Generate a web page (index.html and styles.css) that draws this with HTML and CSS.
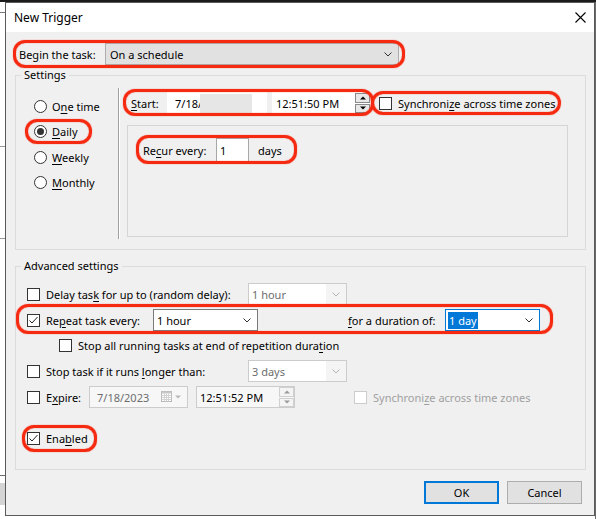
FILE: index.html
```html
<!DOCTYPE html>
<html>
<head>
<meta charset="utf-8">
<title>New Trigger</title>
<link rel="stylesheet" href="styles.css">
</head>
<body>
<div class="screen">
  <div class="topbar"></div>
  <div class="main">
    <div class="bg-left"></div>
    <div class="dialog">
      <div class="titlebar">
        <span class="title">New Trigger</span>
        <svg class="close" width="11" height="11" viewBox="0 0 11 11"><path d="M0.5 0.5L10.5 10.5M10.5 0.5L0.5 10.5" stroke="#000" stroke-width="1.1" fill="none"/></svg>
      </div>
      <div class="content">
        <div class="begin-row">
          <div class="hl hl-begin">
            <span class="begin-lbl">Be<u>g</u>in the task:</span>
            <div class="combo combo-begin">
              <span class="combo-txt">On a schedule</span>
              <span class="chev"><svg width="8" height="5" viewBox="0 0 8 5"><path d="M0.5 0.5L4 4L7.5 0.5" stroke="#333" fill="none"/></svg></span>
            </div>
          </div>
        </div>

        <fieldset class="group settings">
          <legend>Settings</legend>
          <div class="settings-body">
            <div class="radios">
              <div class="radio-row"><span class="opt"><span class="radio"></span><span class="opt-lbl">O<u>n</u>e time</span></span></div>
              <div class="radio-row"><span class="opt hl hl-daily"><span class="radio checked"></span><span class="opt-lbl"><u>D</u>aily</span></span></div>
              <div class="radio-row"><span class="opt"><span class="radio"></span><span class="opt-lbl"><u>W</u>eekly</span></span></div>
              <div class="radio-row"><span class="opt"><span class="radio"></span><span class="opt-lbl"><u>M</u>onthly</span></span></div>
            </div>
            <div class="vsep"></div>
            <div class="schedule">
              <div class="start-row">
                <div class="hl hl-start">
                  <span class="start-lbl"><u>S</u>tart:</span>
                  <div class="field date-start">
                    <span class="date-txt">7/18/</span><span class="blur"></span>
                  </div>
                  <div class="field time-start">
                    <span class="field-txt">12:51:50 PM</span>
                    <span class="spin">
                      <span class="spin-btn"><svg width="6" height="4" viewBox="0 0 6 4"><path d="M0 3.5L3 0.5L6 3.5Z" fill="#000"/></svg></span>
                      <span class="spin-btn"><svg width="6" height="4" viewBox="0 0 6 4"><path d="M0 0.5L3 3.5L6 0.5Z" fill="#000"/></svg></span>
                    </span>
                  </div>
                </div>
                <div class="hl hl-sync">
                  <span class="check"></span>
                  <span class="chk-lbl">Synchroni<u>z</u>e across time zones</span>
                </div>
              </div>
              <div class="panel">
                <div class="hl hl-recur">
                  <span class="recur-lbl">Re<u>c</u>ur every:</span>
                  <span class="num-input">1</span>
                  <span class="days">days</span>
                </div>
              </div>
            </div>
          </div>
        </fieldset>

        <fieldset class="group advanced">
          <legend>Advanced settings</legend>
          <div class="adv-body">
            <div class="adv-row r-delay">
              <span class="check"></span>
              <span class="chk-lbl w-wide">Delay tas<u>k</u> for up to (random delay):</span>
              <div class="combo combo-dis w-99">
                <span class="combo-txt">1 hour</span>
                <span class="chev chev-dis"><svg width="8" height="5" viewBox="0 0 8 5"><path d="M0.5 0.5L4 4L7.5 0.5" stroke="#b4b4b4" fill="none"/></svg></span>
              </div>
            </div>
            <div class="adv-row r-repeat">
              <div class="hl hl-repeat">
                <span class="check checked"><svg width="11" height="11" viewBox="0 0 11 11"><path d="M1.5 5.5L4 8L9.5 2" stroke="#222" stroke-width="1" fill="none"/></svg></span>
                <span class="chk-lbl w-repeat">Re<u>p</u>eat task every:</span>
                <div class="combo w-105">
                  <span class="combo-txt">1 hour</span>
                  <span class="chev"><svg width="8" height="5" viewBox="0 0 8 5"><path d="M0.5 0.5L4 4L7.5 0.5" stroke="#333" fill="none"/></svg></span>
                </div>
                <span class="dur-lbl"><u>f</u>or a duration of:</span>
                <div class="combo combo-focus w-95">
                  <span class="combo-txt"><span class="sel">1 day</span></span>
                  <span class="chev"><svg width="8" height="5" viewBox="0 0 8 5"><path d="M0.5 0.5L4 4L7.5 0.5" stroke="#333" fill="none"/></svg></span>
                </div>
              </div>
            </div>
            <div class="adv-row r-stopall">
              <span class="check"></span>
              <span class="chk-lbl">Stop all running tasks at end of repetition dura<u>t</u>ion</span>
            </div>
            <div class="adv-row r-stop">
              <span class="check"></span>
              <span class="chk-lbl w-wide">Stop task if it runs <u>l</u>onger than:</span>
              <div class="combo combo-dis w-99">
                <span class="combo-txt">3 days</span>
                <span class="chev chev-dis"><svg width="8" height="5" viewBox="0 0 8 5"><path d="M0.5 0.5L4 4L7.5 0.5" stroke="#b4b4b4" fill="none"/></svg></span>
              </div>
            </div>
            <div class="adv-row r-expire">
              <span class="check"></span>
              <span class="chk-lbl w-expire">E<u>x</u>pire:</span>
              <div class="field field-dis w-99">
                <span class="field-txt dis-txt">7/18/2023</span>
                <span class="cal">
                  <svg width="12" height="12" viewBox="0 0 12 12"><rect x="0.5" y="0.5" width="10" height="10" fill="#fff" stroke="#b8b8b8"/><rect x="0.5" y="0.5" width="10" height="2" fill="#c8c8c8"/><path d="M3.5 2.5V10.5M5.5 2.5V10.5M7.5 2.5V10.5M0.5 4.5H10.5M0.5 6.5H10.5M0.5 8.5H10.5" stroke="#d2d2d2"/></svg>
                  <svg width="6" height="4" viewBox="0 0 6 4"><path d="M0 0.5L3 3.5L6 0.5Z" fill="#b8b8b8"/></svg>
                </span>
              </div>
              <div class="field field-dis w-99 time-exp">
                <span class="field-txt">12:51:52 PM</span>
                <span class="spin spin-dis">
                  <span class="spin-btn"><svg width="6" height="4" viewBox="0 0 6 4"><path d="M0 3.5L3 0.5L6 3.5Z" fill="#9a9a9a"/></svg></span>
                  <span class="spin-btn"><svg width="6" height="4" viewBox="0 0 6 4"><path d="M0 0.5L3 3.5L6 0.5Z" fill="#9a9a9a"/></svg></span>
                </span>
              </div>
              <span class="check check-dis"></span>
              <span class="chk-lbl dis-lbl">Synchroni<u>z</u>e across time zones</span>
            </div>
            <div class="adv-row r-enabled">
              <div class="hl hl-enabled">
                <span class="check checked"><svg width="11" height="11" viewBox="0 0 11 11"><path d="M1.5 5.5L4 8L9.5 2" stroke="#222" stroke-width="1" fill="none"/></svg></span>
                <span class="chk-lbl">Ena<u>b</u>led</span>
              </div>
            </div>
          </div>
        </fieldset>

        <div class="buttons">
          <button class="btn btn-default">OK</button>
          <button class="btn">Cancel</button>
        </div>
      </div>
    </div>
    <div class="bg-right"></div>
  </div>
</div>
</body>
</html>
```

FILE: styles.css
```css
* { box-sizing: border-box; }
html, body { margin: 0; padding: 0; }
body {
  width: 596px;
  height: 519px;
  overflow: hidden;
  background: #ffffff;
  font-family: "Noto Sans", "Liberation Sans", sans-serif;
  font-size: 11px;
  line-height: 15px;
  color: #000;
}
u { text-decoration: underline; text-underline-offset: 2px; text-decoration-thickness: 1px; }

.screen { display: flex; flex-direction: column; width: 596px; height: 519px; }
.topbar { height: 2px; background: #1c1c1c; flex: none; }
.main { display: flex; flex: none; }
.bg-left {
  width: 5px;
  height: 517px;
  flex: none;
  background:
    linear-gradient(#7a7a7a, #7a7a7a) 0 10px / 5px 1px no-repeat,
    linear-gradient(#9a9a9a, #9a9a9a) 0 144px / 5px 1px no-repeat,
    linear-gradient(#9a9a9a, #9a9a9a) 0 236px / 5px 1px no-repeat,
    linear-gradient(#6a6a6a, #6a6a6a) 0 473px / 5px 1px no-repeat,
    linear-gradient(#d4d4d4, #d4d4d4) 0 481px / 5px 22px no-repeat,
    #ffffff;
}
.bg-right { width: 1px; height: 517px; background: #6a6a6a; flex: none; }

.dialog {
  width: 590px;
  height: 514px;
  flex: none;
  border: 1px solid #5a5a5a;
  background: #f0f0f0;
  display: flex;
  flex-direction: column;
}
.titlebar {
  height: 29px;
  flex: none;
  background: #ffffff;
  display: flex;
  align-items: center;
  justify-content: space-between;
  padding: 0 8px 0 8px;
}
.title { font-size: 12px; }

.content { display: flex; flex-direction: column; flex: 1; }

/* highlight annotations */
.hl { position: relative; }
.hl::after {
  content: "";
  position: absolute;
  border: 3px solid #f52a10;
  border-radius: 12px;
  box-shadow: 0 0 1px #f52a10, inset 0 0 1px #f52a10;
  pointer-events: none;
}
.hl-begin::after { top: -3px; bottom: -3px; left: -6px; right: -6px; }
.hl-daily::after { top: -5px; bottom: -5px; left: -9px; right: -14px; }
.hl-start::after { top: -3px; bottom: -2px; left: -8px; right: -4px; }
.hl-sync::after { top: -5px; bottom: -4px; left: -8px; right: -6px; }
.hl-recur::after { top: -3px; bottom: -2px; left: -7px; right: -15px; }
.hl-repeat::after { top: -5px; bottom: -3px; left: -11px; right: -13px; }
.hl-enabled::after { top: -6px; bottom: -6px; left: -5px; right: -9px; }

/* begin row */
.begin-row { margin-top: 11px; padding-left: 13px; display: flex; }
.hl-begin { display: flex; align-items: center; }
.begin-lbl { width: 86px; }
.combo {
  display: flex;
  align-items: center;
  height: 22px;
  border: 1px solid #7a7a7a;
  background: #fff;
  padding-left: 3px;
}
.combo-txt { flex: 1; white-space: nowrap; }
.chev { width: 20px; display: flex; justify-content: center; align-items: center; }
.combo-begin { width: 294px; background: #e1e1e1; border-color: #adadad; padding-left: 4px; }
.combo-dis { border-color: #cccccc; color: #6d6d6d; padding-left: 3px; }
.combo-dis .chev { height: 20px; background: #f4f4f4; }
.combo-focus { border-color: #0078d7; padding-left: 2px; }
.sel { background: #0078d7; color: #fff; padding: 1px 1px; }
.w-99 { width: 99px; }
.w-105 { width: 105px; }
.w-95 { width: 95px; }

/* group boxes */
.group {
  margin: 0 8px 0 9px;
  padding: 0;
  min-width: 0;
  border: 1px solid #dcdcdc;
}
.group legend {
  margin-left: 5px;
  padding: 0 3px;
  line-height: 16px;
  font-size: 11px;
}
.settings { margin-top: 2px; }
.advanced { margin-top: 8px; }

.settings-body { display: flex; }
.radios {
  width: 102px;
  padding: 11px 0 0 18px;
  display: flex;
  flex-direction: column;
}
.radio-row { height: 25.33px; display: flex; align-items: center; }
.opt { display: inline-flex; align-items: center; }
.radio {
  width: 13px;
  height: 13px;
  border: 1px solid #333;
  border-radius: 50%;
  background: #fff;
  display: flex;
  align-items: center;
  justify-content: center;
}
.radio.checked::before {
  content: "";
  width: 7px;
  height: 7px;
  border-radius: 50%;
  background: #333;
}
.opt-lbl { margin-left: 5px; }

.vsep {
  width: 2px;
  margin: 5px 0 10px;
  border-left: 1px solid #a0a0a0;
  border-right: 1px solid #ffffff;
  flex: none;
}
.schedule { flex: 1; padding: 9px 17px 12px 11px; display: flex; flex-direction: column; }
.start-row { display: flex; align-items: center; height: 22px; }
.hl-start { display: flex; align-items: center; }
.start-lbl { width: 36px; }
.field {
  display: flex;
  align-items: center;
  height: 22px;
  background: #fff;
}
.date-start { width: 100px; padding-left: 8px; }
.date-txt { white-space: nowrap; }
.blur { width: 52px; height: 19px; background: #e6e6e6; margin-left: -2px; }
.time-start { width: 98px; margin-left: 5px; padding-left: 4px; }
.field-txt { flex: 1; white-space: nowrap; }
.spin { display: flex; flex-direction: column; gap: 1px; width: 15px; height: 22px; padding: 1px 0; }
.spin-btn {
  flex: 1;
  display: flex;
  align-items: center;
  justify-content: center;
  border: 1px solid #8a8a8a;
  background: #e8e8e8;
}
.spin-dis .spin-btn { border-color: #d0d0d0; background: #f4f4f4; }
.hl-sync { display: flex; align-items: center; margin-left: 9px; }
.check {
  width: 13px;
  height: 13px;
  flex: none;
  border: 1px solid #333;
  background: #fff;
  display: flex;
}
.check-dis { border-color: #cccccc; }
.chk-lbl { margin-left: 6px; white-space: nowrap; }
.dis-lbl { color: #a0a0a0; }

.panel {
  margin: 11px 0 0 -4px;
  height: 112px;
  border: 1px solid #d5d5d5;
  padding: 12px 0 0 15px;
  display: flex;
  align-items: flex-start;
}
.hl-recur { display: flex; align-items: center; }
.recur-lbl { width: 73px; }
.num-input {
  width: 33px;
  height: 24px;
  border: 1px solid #a8a8a8;
  background: #fff;
  padding-left: 3px;
  display: flex;
  align-items: center;
}
.days { margin-left: 9px; }

/* advanced */
.adv-body { padding: 9px 0 20px 11px; display: flex; flex-direction: column; }
.adv-row { display: flex; align-items: center; height: 22px; }
.r-repeat { margin-top: 4px; }
.r-stopall { margin-top: 3px; padding-left: 32px; }
.r-stop { margin-top: 4px; }
.r-expire { margin-top: 4px; }
.r-enabled { margin-top: 19px; }
.hl-repeat { display: flex; align-items: center; }
.hl-enabled { display: flex; align-items: center; }
.w-wide { width: 202px; }
.w-repeat { width: 107px; }
.w-expire { width: 43px; }
.dur-lbl { width: 97px; margin-left: 90px; }
.field-dis { border: 1px solid #cccccc; background: #f7f7f7; color: #6d6d6d; padding-left: 7px; }
.dis-txt { color: #6d6d6d; }
.cal { display: flex; align-items: center; gap: 2px; margin-right: 6px; }
.time-exp { margin-left: 8px; padding-left: 3px; color: #000; margin-right: 59px; }
.time-exp .field-txt { color: #000; }

.buttons {
  margin-top: 11px;
  display: flex;
  justify-content: flex-end;
  gap: 8px;
  padding-right: 12px;
}
.btn {
  width: 75px;
  height: 23px;
  border: 1px solid #adadad;
  background: #e1e1e1;
  font-family: "Noto Sans", "Liberation Sans", sans-serif;
  font-size: 11px;
  line-height: 15px;
  color: #000;
  padding: 0;
}
.btn-default { border: 2px solid #0078d7; }
```
